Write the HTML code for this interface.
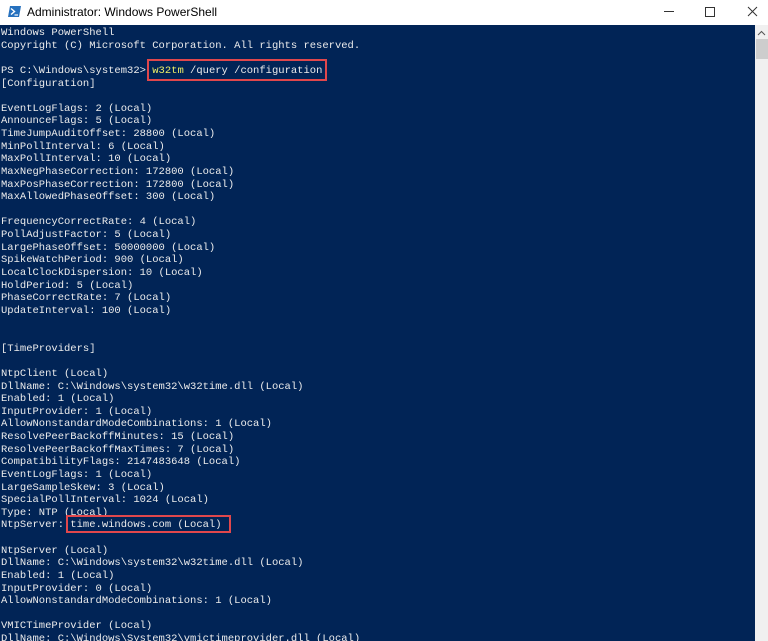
<!DOCTYPE html>
<html><head><meta charset="utf-8"><style>
html,body{margin:0;padding:0;width:768px;height:641px;overflow:hidden;background:#fff}
#title{position:absolute;left:0;top:0;width:768px;height:25px;background:#fff}
#title .t{position:absolute;left:27px;top:5px;font:12px "Liberation Sans",sans-serif;color:#000}
#term{position:absolute;left:0;top:25px;width:755px;height:616px;background:#012456;overflow:hidden}
#sb{position:absolute;left:755px;top:25px;width:13px;height:616px;background:#f0f0f0}
pre{margin:0;position:absolute;left:1px;top:2px;font:10.5px/12.625px "Liberation Mono",monospace;color:#ececec}
.y{color:#eeee66}
.box{position:absolute;border:2px solid #e0474c;box-sizing:border-box}
</style></head><body>
<div id="title">
<svg style="position:absolute;left:8px;top:6px" width="13" height="11"><polygon points="2,0 13,0 11,11 0,11" fill="#2671be"/><path d="M3,2.5 L6.5,5.5 L3,8.5" stroke="#fff" stroke-width="1.4" fill="none"/><path d="M6.5,9 H10" stroke="#fff" stroke-width="1.2"/></svg>
<div class="t">Administrator: Windows PowerShell</div>
<svg style="position:absolute;left:664px;top:5px" width="100" height="14"><path d="M0,6.5 H10" stroke="#333" stroke-width="1"/><rect x="41.5" y="2.5" width="9" height="9" stroke="#333" fill="none"/><path d="M84,2 L93,11 M93,2 L84,11" stroke="#333" stroke-width="1"/></svg>
</div>
<div id="term"><pre>Windows PowerShell
Copyright (C) Microsoft Corporation. All rights reserved.

PS C:\Windows\system32&gt; <span class="y">w32tm</span> /query /configuration
[Configuration]

EventLogFlags: 2 (Local)
AnnounceFlags: 5 (Local)
TimeJumpAuditOffset: 28800 (Local)
MinPollInterval: 6 (Local)
MaxPollInterval: 10 (Local)
MaxNegPhaseCorrection: 172800 (Local)
MaxPosPhaseCorrection: 172800 (Local)
MaxAllowedPhaseOffset: 300 (Local)

FrequencyCorrectRate: 4 (Local)
PollAdjustFactor: 5 (Local)
LargePhaseOffset: 50000000 (Local)
SpikeWatchPeriod: 900 (Local)
LocalClockDispersion: 10 (Local)
HoldPeriod: 5 (Local)
PhaseCorrectRate: 7 (Local)
UpdateInterval: 100 (Local)


[TimeProviders]

NtpClient (Local)
DllName: C:\Windows\system32\w32time.dll (Local)
Enabled: 1 (Local)
InputProvider: 1 (Local)
AllowNonstandardModeCombinations: 1 (Local)
ResolvePeerBackoffMinutes: 15 (Local)
ResolvePeerBackoffMaxTimes: 7 (Local)
CompatibilityFlags: 2147483648 (Local)
EventLogFlags: 1 (Local)
LargeSampleSkew: 3 (Local)
SpecialPollInterval: 1024 (Local)
Type: NTP (Local)
NtpServer: time.windows.com (Local)

NtpServer (Local)
DllName: C:\Windows\system32\w32time.dll (Local)
Enabled: 1 (Local)
InputProvider: 0 (Local)
AllowNonstandardModeCombinations: 1 (Local)

VMICTimeProvider (Local)
DllName: C:\Windows\System32\vmictimeprovider.dll (Local)</pre>
<div class="box" style="left:147px;top:34px;width:180px;height:22px"></div>
<div class="box" style="left:66px;top:490px;width:165px;height:18px"></div>
</div>
<div id="sb"><svg width="13" height="10" style="position:absolute;top:3px"><path d="M3,7 L6.5,3.5 L10,7" stroke="#555" fill="none"/></svg><div style="position:absolute;left:1px;top:14px;width:12px;height:20px;background:#cdcdcd"></div></div>
</body></html>
